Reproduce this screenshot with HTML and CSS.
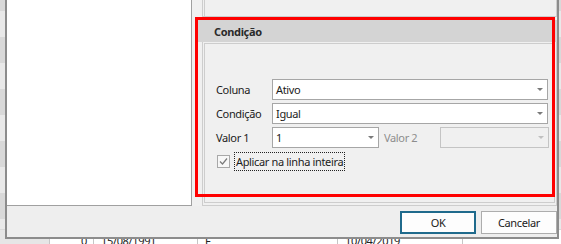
FILE: index.html
```html
<!DOCTYPE html>
<html>
<head>
<meta charset="utf-8">
<link rel="stylesheet" href="styles.css">
</head>
<body>
<div class="desk">
  <div class="sheet">
    <div class="row">
      <div class="cell head"></div>
      <div class="cell num">0</div>
      <div class="cell">15/08/1991</div>
      <div class="cell">F</div>
      <div class="cell">10/04/2019</div>
      <div class="cell"></div>
    </div>
  </div>

  <div class="dialog">
    <div class="main">
      <div class="list"></div>
      <div class="side">
        <div class="topgroup"><div class="topgroup-in"></div></div>
        <div class="cond">
          <div class="cond-head">Condição</div>
          <div class="cond-body">
            <div class="cond-in">
              <div class="form">
                <span class="lbl">Coluna</span>
                <div class="combo wide"><span>Ativo</span><i class="arrow"></i></div>
                <span class="lbl">Condição</span>
                <div class="combo wide"><span>Igual</span><i class="arrow"></i></div>
                <span class="lbl">Valor 1</span>
                <div class="pair">
                  <div class="combo v1"><span>1</span><i class="arrow"></i></div>
                  <span class="lbl2">Valor 2</span>
                  <div class="combo v2 disabled"><span></span><i class="arrow"></i></div>
                </div>
              </div>
              <div class="check-row">
                <span class="checkbox">
                  <svg width="13" height="13" viewBox="0 0 13 13"><polyline points="3,6.5 5.5,9 10,3.5" fill="none" stroke="#7a7a7a" stroke-width="1.2"/></svg>
                </span>
                <span class="check-lbl">Aplicar na linha inteira</span>
              </div>
            </div>
          </div>
        </div>
      </div>
    </div>
    <div class="bar">
      <div class="btn default">OK</div>
      <div class="btn">Cancelar</div>
    </div>
  </div>

  <div class="mark"></div>
</div>
</body>
</html>
```

FILE: styles.css
```css
* { box-sizing: border-box; margin: 0; padding: 0; }
html, body { width: 561px; height: 244px; overflow: hidden; }
body {
  font-family: "Noto Sans", "Open Sans", sans-serif;
  font-size: 11px;
  letter-spacing: -0.35px;
  color: #1b1b1b;
  background: #fff;
}
.desk {
  position: relative;
  width: 561px;
  height: 244px;
  overflow: hidden;
  background: repeating-linear-gradient(to bottom, #d9d9d9 0 26px, #e9e9e9 26px 52px);
  background-position: 0 -15px;
}

/* background grid */
.sheet { padding-top: 230px; }
.row {
  display: grid;
  grid-template-columns: 49px 44px 104px 140px 125px 99px;
  height: 22px;
}
.cell {
  background: #fff;
  border-left: 1px solid #c6c6c6;
  line-height: 22px;
  padding-left: 7px;
  color: #222;
  white-space: nowrap;
}
.cell.head { background: #e6e6e6; border-left: 0; }
.cell.num { text-align: right; padding-right: 6px; padding-left: 0; }

/* dialog */
.dialog {
  position: absolute;
  left: 5px;
  top: 0;
  width: 554px;
  height: 239px;
  background: #f0f0f0;
  border: 2px solid #8c8c8c;
  border-top: 0;
  display: flex;
  flex-direction: column;
}
.main { display: flex; height: 206px; }
.list {
  width: 185px;
  background: #fff;
  border-right: 1px solid #a0a0a0;
  border-bottom: 1px solid #a0a0a0;
}
.side { flex: 1; display: flex; flex-direction: column; }
.topgroup {
  height: 17px;
  margin-left: 10px;
  border: 1px solid #cdcdcd;
  border-top: 0;
  padding-left: 1px;
}
.topgroup-in { height: 100%; border-left: 1px solid #cdcdcd; }
.cond {
  flex: 1;
  margin-top: 3px;
  margin-left: 6px;
  display: flex;
  flex-direction: column;
}
.cond-head {
  height: 22px;
  background: #d4d4d4;
  font-weight: bold;
  color: #2a2a2a;
  padding-left: 16px;
  display: flex;
  align-items: center;
}
.cond-body {
  flex: 1;
  margin-left: 4px;
  border: 1px solid #cdcdcd;
  border-top: 0;
  padding: 1px 1px 2px 1px;
  display: flex;
}
.cond-in {
  flex: 1;
  border: 1px solid #cdcdcd;
  padding: 35px 0 0 11px;
}
.form {
  display: grid;
  grid-template-columns: 56px auto;
  row-gap: 3px;
  align-items: center;
}
.lbl { white-space: nowrap; }
.combo {
  height: 21px;
  border: 1px solid #a6a6a6;
  background: #fff;
  display: flex;
  align-items: center;
  padding-left: 3px;
}
.combo.wide { width: 276px; }
.combo.v1 { width: 107px; }
.combo.v2 { width: 109px; }
.combo .arrow {
  margin-left: auto;
  margin-right: 4px;
  width: 0;
  height: 0;
  border-left: 3px solid transparent;
  border-right: 3px solid transparent;
  border-top: 3px solid #7a7a7a;
}
.combo.disabled { background: #f0f0f0; border-color: #c4c4c4; }
.combo.disabled .arrow { border-top-color: #c0c0c0; }
.pair { display: flex; align-items: center; }
.lbl2 { width: 56px; margin-left: 5px; color: #8d8d8d; white-space: nowrap; }
.check-row {
  display: flex;
  align-items: center;
  margin-top: 4px;
  height: 19px;
}
.checkbox {
  width: 13px;
  height: 13px;
  margin-left: 1px;
  margin-right: 4px;
  border: 1px solid #a8a8a8;
  background: #f7f7f7;
  display: flex;
}
.checkbox svg { margin: -1px; }
.check-lbl {
  height: 19px;
  line-height: 17px;
  border: 1px dotted #222;
  padding: 0 1px;
  white-space: nowrap;
}

/* buttons */
.bar {
  flex: 1;
  display: flex;
  justify-content: flex-end;
  align-items: flex-start;
  gap: 5px;
  padding-top: 5px;
  background: #eeeeee;
}
.btn {
  width: 76px;
  height: 23px;
  background: #fdfdfd;
  border: 1px solid #adadad;
  display: flex;
  align-items: center;
  justify-content: center;
}
.btn.default { border: 2px solid #1f6a8c; }

/* red annotation */
.mark {
  position: absolute;
  left: 195px;
  top: 17px;
  width: 360px;
  height: 180px;
  border: 3px solid #ff0000;
}
```
